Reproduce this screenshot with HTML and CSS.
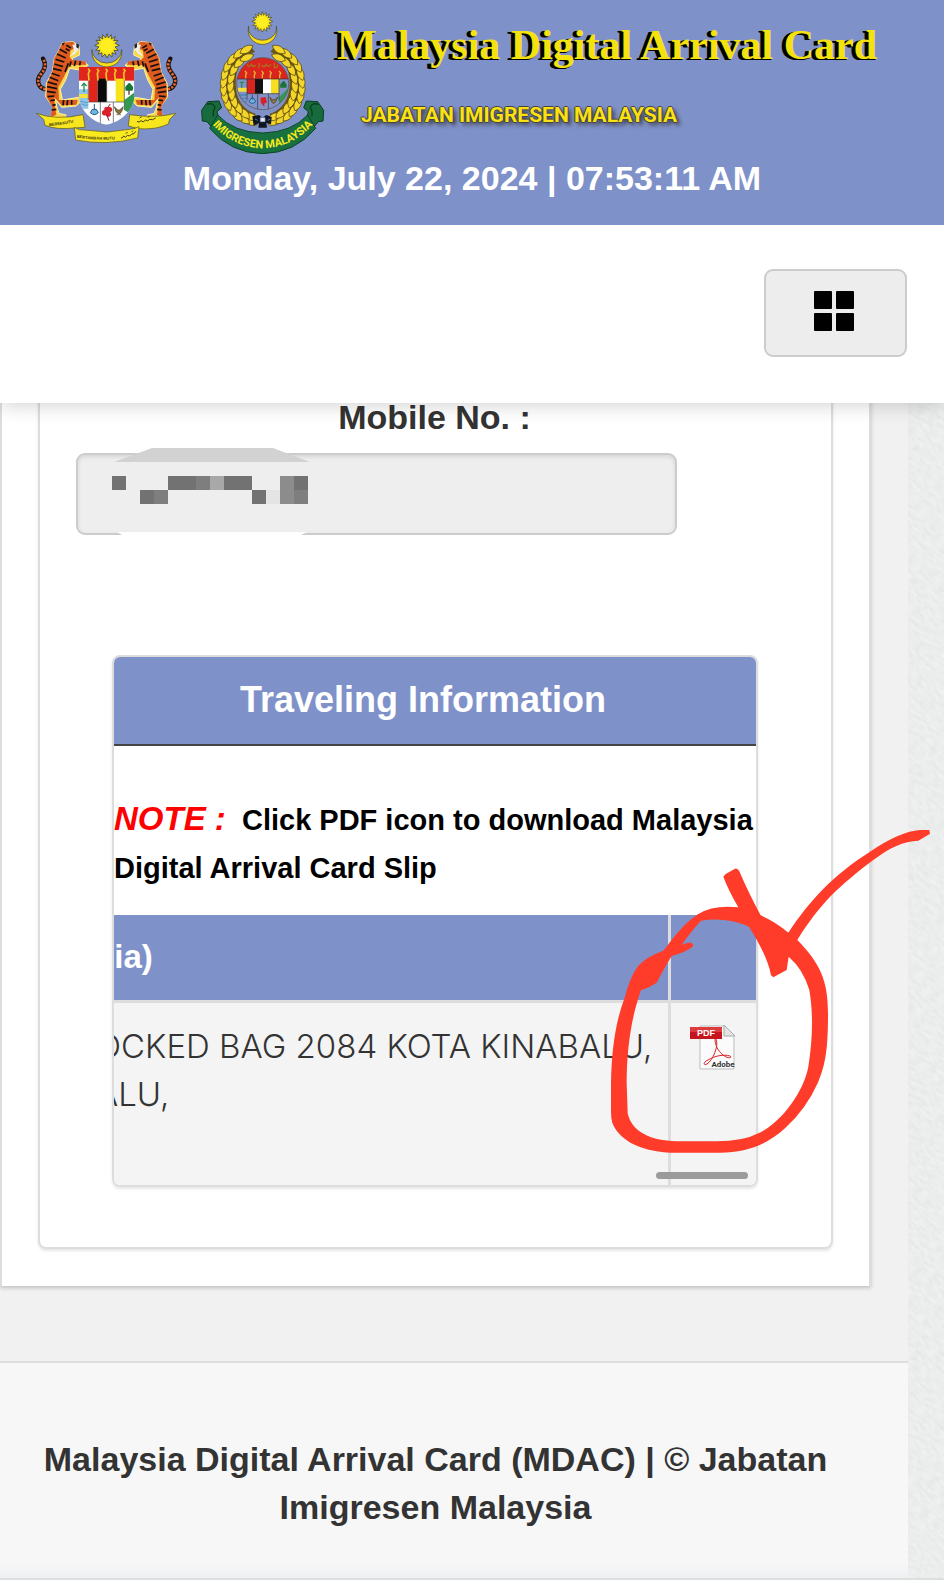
FILE: index.html
```html
<!DOCTYPE html>
<html lang="en">
<head>
    <meta charset="UTF-8">
    <meta name="viewport" content="width=device-width, initial-scale=1.0">
    <title>Malaysia Digital Arrival Card</title>
    <link rel="stylesheet" href="styles.css">
</head>
<body>
    <header class="top">
        <div class="banner">
            <div class="brand">
                <svg class="crest" viewBox="40 90 441 372" aria-hidden="true">
                    <defs>
                        <g id="tiger">
                            <path d="M78 268C52 262 50 238 64 222C78 206 80 192 70 176" fill="none" stroke="#111" stroke-width="13" stroke-linecap="round"/>
                            <path d="M78 268C52 262 50 238 64 222C78 206 80 192 70 176" fill="none" stroke="#e8662a" stroke-width="8" stroke-dasharray="7 4"/>
                            <path d="M128 128L160 125L178 138L180 165L158 175L160 186L192 184L206 196L180 210L150 205L138 240L122 268L128 300L176 292L184 304L170 318L126 322L108 300L112 322L118 340L140 345L132 356L92 356L100 322L78 290L80 250L98 215L104 175L118 150Z" fill="#f8d64a" stroke="#fff3a0" stroke-width="3"/>
                            <path d="M128 128L160 125L172 140L152 152L150 172L158 180L196 184L200 194L150 196L132 232L116 262L118 300L174 300L170 314L126 316L104 292L106 322L110 344L92 352L98 322L80 290L82 250L98 215L104 175L118 150Z" fill="#dd5a20"/>
                            <path d="M158 134L174 132L178 146L166 162L150 170L164 152Z" fill="#eee"/>
                            <path d="M170 130L178 134L177 146L170 142ZM126 130L136 127L130 138Z" fill="#222"/>
                            <path d="M120 148L142 160M112 162L138 174M108 178L134 186M104 192L130 200M100 206L126 212M96 220L120 228M90 232L116 242M84 246L112 254M82 260L112 266M82 274L108 278M84 290L104 288M92 302L106 300M98 316L108 314M96 330L110 328M140 136L154 144M138 146L150 152M154 184L150 200M168 182L164 198M182 184L180 196M132 300L130 316M144 300L142 316M156 300L156 314M146 190L136 216" stroke="#16100c" stroke-width="5" fill="none"/>
                        </g>
                        <g id="sun">
                            <path d="M0 -37L4 -24L13 -34L13 -21L25 -28L20 -16L33 -17L24 -8L37 -2L24 3L34 13L21 13L27 25L15 20L15 33L6 24L0 36L-6 24L-15 33L-15 20L-27 25L-21 13L-34 13L-24 3L-37 -2L-24 -8L-33 -17L-20 -16L-25 -28L-13 -21L-13 -34L-4 -24Z" fill="#f9e61a" stroke="#35331c" stroke-width="2"/>
                            <circle r="20" fill="#ffee20"/>
                        </g>
                    </defs>
                    <use href="#tiger"/>
                    <use href="#tiger" transform="translate(522 0) scale(-1 1)"/>
                    <path d="M217 149A45 45 0 1 0 306 149A42 38 0 1 1 217 149Z" fill="#f9df1a" stroke="#4c451c" stroke-width="2"/>
                    <use href="#sun" x="262" y="138"/>
                    <clipPath id="shield"><path d="M178 200H344V290C342 330 304 366 260 374C216 366 180 330 178 290Z"/></clipPath>
                    <g clip-path="url(#shield)">
                        <rect x="178" y="200" width="168" height="180" fill="#fff"/>
                        <rect x="178" y="200" width="168" height="42" fill="#e1251b"/>
                        <rect x="207" y="236" width="27" height="70" fill="#e1251b"/>
                        <rect x="234" y="236" width="27" height="70" fill="#0a0a0a"/>
                        <rect x="288" y="236" width="26" height="70" fill="#f8e21b"/>
                        <path d="M178 268H206V326H178Z" fill="#8fc5e8"/>
                        <path d="M178 282H206V294H178Z" fill="#f3e13a"/>
                        <path d="M180 306q6-5 12 0t14 0M180 314q6-5 12 0t14 0" stroke="#3e7fb5" fill="none" stroke-width="2"/>
                        <path d="M193 276V254M186 258L193 250L201 258" stroke="#2b8c50" stroke-width="4" fill="none"/>
                        <path d="M314 300L346 276V350L314 330Z" fill="#2f9a50"/>
                        <path d="M328 284V262" stroke="#553c1a" stroke-width="4"/>
                        <path d="M318 272Q314 258 322 256Q328 242 336 256Q344 262 338 272Z" fill="#177535"/>
                        <path d="M206 206V300M261 236V306M314 236V330M206 306H314M242 306V374M281 306V374" stroke="#444" stroke-width="2" fill="none"/>
                        <path d="M212 338Q224 350 236 338L230 328H218ZM224 312V330" fill="#6db6e0" stroke="#26588a" stroke-width="3"/>
                        <path d="M262 322C276 314 284 332 272 336C280 348 264 356 258 346C244 350 244 330 254 330C252 322 260 318 262 322Z" fill="#d8212a"/>
                        <path d="M262 346L268 362M264 322L272 312" stroke="#7c1b1b" stroke-width="3"/>
                        <path d="M284 320Q288 340 298 342Q308 338 310 320L300 330H294ZM290 344H304" fill="#8a7440" stroke="#4b3d20" stroke-width="2"/>
                    </g>
                    <path d="M205 206l5 6l-4 8l2 22M232 206l5 6l-4 8l2 22M258 206l5 6l-4 8l2 22M284 206l5 6l-4 8l2 22M311 206l5 6l-4 8l2 22" fill="none" stroke="#f0c22a" stroke-width="5"/>
                    <path d="M50 340Q110 362 190 344L196 382L164 384Q110 390 76 376L72 358Z" fill="#f7e51d" stroke="#5a5316" stroke-width="2"/>
                    <path d="M468 340Q410 356 330 344L326 378L356 386Q410 390 446 372L450 358Z" fill="#f7e51d" stroke="#5a5316" stroke-width="2"/>
                    <path d="M164 382Q178 392 194 390L262 396L330 388Q348 386 358 380L354 414Q260 438 168 420Z" fill="#f9e91f" stroke="#5a5316" stroke-width="2"/>
                    <path id="motto-a" d="M88 378Q130 376 190 360" fill="none"/>
                    <path id="motto-b" d="M171 413Q240 424 320 415" fill="none"/>
                    <text class="motto"><textPath href="#motto-a">BERSEKUTU</textPath></text>
                    <text class="motto"><textPath href="#motto-b">BERTAMBAH MUTU</textPath></text>
                    <path d="M352 364q6 6 12-2q6 8 14-2q6 6 12-2q8 4 18-4M360 354l6-4M384 352l6-3M304 414q4 2 8-6q4 8 12-2q6 6 12-4q8 2 12-8M318 400l6-3M336 396l4-4" fill="none" stroke="#4a4310" stroke-width="3"/>
                </svg>

                <svg class="seal" viewBox="530 20 390 441" aria-hidden="true">
                    <path d="M685 78A43 43 0 1 0 768 78A42 36 0 1 1 685 78Z" fill="#f9df1a" stroke="#4c451c" stroke-width="2"/>
                    <use href="#sun" transform="translate(726 65) scale(.84)"/>
                    <defs>
                        <g id="leaf">
                            <path d="M0 4C15 -5 20 -22 9 -40C-6 -30 -11 -12 0 4Z" fill="#f4d52a" stroke="#4a3c10" stroke-width="2"/>
                        </g>
                        <g id="spray">
                            <path d="M696 366C640 356 608 312 608 256C610 200 640 160 690 138L704 154C662 172 646 204 646 250C646 296 670 330 706 340Z" fill="#6d5613"/>
                            <use href="#leaf" transform="translate(706 372) rotate(-76)"/>
                            <use href="#leaf" transform="translate(684 368) rotate(-64)"/>
                            <use href="#leaf" transform="translate(662 360) rotate(-54)"/>
                            <use href="#leaf" transform="translate(644 346) rotate(-44)"/>
                            <use href="#leaf" transform="translate(628 328) rotate(-34)"/>
                            <use href="#leaf" transform="translate(616 306) rotate(-22)"/>
                            <use href="#leaf" transform="translate(609 284) rotate(-12)"/>
                            <use href="#leaf" transform="translate(606 260)"/>
                            <use href="#leaf" transform="translate(607 236) rotate(8)"/>
                            <use href="#leaf" transform="translate(613 212) rotate(16)"/>
                            <use href="#leaf" transform="translate(624 190) rotate(26)"/>
                            <use href="#leaf" transform="translate(642 170) rotate(38)"/>
                            <use href="#leaf" transform="translate(662 156) rotate(48)"/>
                            <use href="#leaf" transform="translate(708 358) rotate(-76)"/>
                            <use href="#leaf" transform="translate(684 352) rotate(-58)"/>
                            <use href="#leaf" transform="translate(662 338) rotate(-42)"/>
                            <use href="#leaf" transform="translate(645 320) rotate(-28)"/>
                            <use href="#leaf" transform="translate(634 298) rotate(-14)"/>
                            <use href="#leaf" transform="translate(627 274) rotate(-4)"/>
                            <use href="#leaf" transform="translate(626 248) rotate(8)"/>
                            <use href="#leaf" transform="translate(631 222) rotate(20)"/>
                            <use href="#leaf" transform="translate(644 198) rotate(34)"/>
                            <use href="#leaf" transform="translate(662 178) rotate(56)"/>
                        </g>
                    </defs>
                    <use href="#spray"/>
                    <use href="#spray" transform="translate(1454 0) scale(-1 1)"/>
                    <clipPath id="disc"><circle cx="727" cy="250" r="78"/></clipPath>
                    <g clip-path="url(#disc)">
                        <rect x="645" y="170" width="164" height="164" fill="#8293ca"/>
                        <rect x="645" y="170" width="164" height="66" fill="#dc241f"/>
                        <rect x="680" y="236" width="24" height="44" fill="#dc241f"/>
                        <rect x="704" y="236" width="24" height="44" fill="#111"/>
                        <rect x="728" y="236" width="24" height="44" fill="#fff"/>
                        <rect x="752" y="236" width="24" height="44" fill="#f6e01d"/>
                        <path d="M652 262H680V274H652Z" fill="#f3e13a"/>
                        <path d="M650 284h30M652 294h28M658 304h22" stroke="#4a86be" stroke-width="4"/>
                        <path d="M664 262V244M658 246h14" stroke="#2b8c50" stroke-width="4"/>
                        <path d="M776 290L804 264V300L776 316Z" fill="#2f9a50"/>
                        <path d="M780 262Q778 250 784 248Q790 236 796 248Q802 254 798 262Z" fill="#177535"/>
                        <path d="M645 236H809M680 236V300M776 236V300M680 280H776M712 280V330M744 280V330" stroke="#333" stroke-width="2"/>
                        <path d="M686 304Q696 314 706 304L700 294H692ZM696 284V298" fill="#6db6e0" stroke="#26588a" stroke-width="3"/>
                        <path d="M720 292L736 290L740 306L732 310V320L722 308Z" fill="#d8212a"/>
                        <path d="M748 290Q752 308 760 310Q768 306 772 290L764 298H756Z" fill="#8a7440" stroke="#4b3d20" stroke-width="2"/>
                        <path d="M674 212l5 6l-3 6v10M700 212l5 6l-3 6v10M724 212l5 6l-3 6v10M748 212l5 6l-3 6v10M776 212l5 6l-3 6v10" fill="none" stroke="#e8b62a" stroke-width="4"/>
                        <path d="M680 192q6 12 14 0q4 12 12 2M716 188v16M724 194q8 10 14-2q4 12 14 0M762 188v14q8 2 10-10" fill="none" stroke="#a8721d" stroke-width="4"/>
                    </g>
                    <circle cx="727" cy="250" r="78" fill="none" stroke="#5c4a3a" stroke-width="2"/>
                    <path d="M696 348L716 344L726 352L738 344L754 350L752 372L738 368L740 382H714L716 368L700 376Z" fill="#101522"/>
                    <path d="M720 352h14v12h-14ZM704 356l8 4M742 360l8-4" fill="#dfe5f4" stroke="#8aa0d6" stroke-width="2"/>
                    <path d="M546 362L544 330L562 304L596 302L604 322L590 334L594 350L572 378L560 364ZM908 362L910 330L892 304L858 302L850 322L864 334L860 350L882 378L894 364Z" fill="#176b3c" stroke="#0c3d22" stroke-width="3"/>
                    <path d="M560 312Q580 306 584 322Q576 334 580 348M894 312Q874 306 870 322Q878 334 874 348" fill="none" stroke="#0c3d22" stroke-width="4"/>
                    <path d="M592 344Q640 396 727 398Q814 396 862 344L886 384Q824 458 727 460Q630 458 568 384Z" fill="#17703d" stroke="#0c4526" stroke-width="3"/>
                    <path id="ribbon" d="M572 368Q636 442 727 444Q818 442 882 368" fill="none"/>
                    <text class="ribbon-text"><textPath href="#ribbon" startOffset="50%">IMIGRESEN MALAYSIA</textPath></text>
                </svg>

                <div class="titles">
                    <h1 class="title">Malaysia Digital Arrival Card</h1>
                    <p class="subtitle">JABATAN IMIGRESEN MALAYSIA</p>
                </div>
            </div>
            <p class="clock">Monday, July 22, 2024 | 07:53:11 AM</p>
        </div>
        <nav class="navbar">
            <button class="menu-btn" type="button" aria-label="Menu">
                <svg class="menu-icon" viewBox="0 0 40 40">
                    <rect width="18" height="18" rx="1"/>
                    <rect x="22" width="18" height="18" rx="1"/>
                    <rect y="22" width="18" height="18" rx="1"/>
                    <rect x="22" y="22" width="18" height="18" rx="1"/>
                </svg>
            </button>
        </nav>
    </header>

    <div class="page">
        <div class="content">
            <main class="card">
                <div class="panel">
                    <div class="field">
                        <label class="label" for="mobile">Mobile No. :</label>
                        <div class="input-wrap">
                            <input class="input" id="mobile" type="text" readonly>
                            <svg class="mask" viewBox="0 0 200 90" aria-hidden="true">
                                <path d="M2 14L40 0H161L198 14Z" fill="#d2d2d2"/>
                                <path d="M5 84H195L187 88H190V90H8V88H12Z" fill="#fff"/>
                                <path d="M0 28h14v14h-14ZM56 28h28v14h-28ZM112 28h28v14h-28ZM140 42h14v14h-14ZM182 28h14v14h-14ZM28 42h14v14h-14Z" fill="#727272"/>
                                <path d="M84 28h14v14h-14ZM42 42h14v14h-14ZM182 42h14v14h-14Z" fill="#7e7e7e"/>
                                <path d="M168 28h14v14h-14ZM168 42h14v14h-14Z" fill="#8c8c8c"/>
                                <path d="M98 28h14v14h-14Z" fill="#a8a8a8"/>
                                <path d="M154 42h14v14h-14Z" fill="#e4e4e4"/>
                            </svg>
                        </div>
                    </div>

                    <section class="travel">
                        <h2 class="travel-title">Traveling Information</h2>
                        <p class="note"><em class="note-tag">NOTE :</em>&nbsp; Click PDF icon to download Malaysia Digital Arrival Card Slip</p>
                        <div class="scroller">
                            <table class="trips">
                                <thead>
                                    <tr>
                                        <th>sia)</th>
                                        <th class="pdf-col"></th>
                                    </tr>
                                </thead>
                                <tbody>
                                    <tr>
                                        <td>OCKED BAG 2084 KOTA KINABALU,<br>ALU,</td>
                                        <td class="pdf-col">
                                            <a class="pdf" href="#" aria-label="Download PDF">
                                                <svg class="pdf-icon" viewBox="0 0 46 47">
                                                    <path d="M10 2H34L44 12V45H10Z" fill="#fbfbfb" stroke="#bdbdbd"/>
                                                    <path d="M34 1V12H45Z" fill="#e4e4e4" stroke="#aaa"/>
                                                    <path d="M26 15C29 22 23 36 17 40C13 42 13 38 18 36C24 32 34 30 40 32C43 34 38 35 33 31C28 27 25 21 25 15" fill="none" stroke="#d8232a"/>
                                                    <rect y="3" width="32" height="12" fill="#c4161c"/>
                                                    <path d="M0 3H32V8H0Z" fill="#dd3b3e"/>
                                                    <text x="16" y="12" class="pdf-label">PDF</text>
                                                    <text x="33" y="43" class="pdf-brand">Adobe</text>
                                                </svg>
                                            </a>
                                        </td>
                                    </tr>
                                </tbody>
                            </table>
                            <div class="thumb"></div>
                        </div>
                    </section>
                </div>
            </main>
            <footer class="footer">Malaysia Digital Arrival Card (MDAC) | © Jabatan Imigresen Malaysia</footer>
        </div>
        <svg class="texture" aria-hidden="true">
            <filter id="grain" x="0" y="0" width="100%" height="100%">
                <feTurbulence type="fractalNoise" baseFrequency=".12 .3" numOctaves="3" seed="4"/>
                <feColorMatrix values=".2 0 0 0 .76  .2 0 0 0 .77  .2 0 0 0 .77  0 0 0 0 1"/>
            </filter>
            <rect x="-1200" y="-800" width="2400" height="2400" transform="rotate(45)" filter="url(#grain)" opacity=".7"/>
        </svg>

        <!-- red marker around the PDF link -->
        <svg class="marker" viewBox="0 0 1212 1260" aria-hidden="true">
            <path fill-rule="evenodd" d="M550 230L557 222L585 206Q593 204 598 214Q625 278 662 346Q705 364 745 398C810 300 880 225 990 155Q1080 94 1140 90H1168L1170 101L1135 122C1090 124 1050 142 1000 180C900 255 840 310 772 420C840 490 864 540 864 640C864 740 858 790 835 845Q800 925 735 985C680 1035 620 1057 540 1058H390C290 1052 235 1015 217 968Q213 955 213 935V850C215 750 225 670 255 590Q270 530 295 497Q320 470 370 452C400 415 430 370 475 342Q520 314 595 322Q565 270 550 230ZM483 362Q455 392 425 434L445 428Q457 426 460 438Q440 456 395 468Q375 500 350 548Q325 564 303 570C275 650 260 740 260 850L263 940C275 995 330 1022 410 1024H530Q610 1024 655 1000C720 970 790 880 805 800C818 720 820 640 808 570Q790 508 746 470L740 510L700 532L693 526C685 480 655 425 627 380Q560 350 483 362Z" fill="#ff3b2a"/>
        </svg>
    </div>
</body>
</html>
```
FILE: styles.css
```css
* {
    box-sizing: border-box;
}

body {
    margin: 0;
    background: #fff;
    color: #333;
    font-family: "Liberation Sans", Arial, sans-serif;
    font-size: 34px;
    line-height: 48px;
}

h1, h2, p {
    margin: 0;
}

.top {
    position: sticky;
    top: 0;
    z-index: 5;
    box-shadow: 0 1px 20px rgba(0, 0, 0, 0.2);
}

.banner {
    background: #7f91c9;
    padding: 7px 0 23px;
}

.brand {
    display: flex;
    align-items: flex-end;
    padding-left: 33px;
}

.crest {
    width: 147px;
    height: 124px;
    margin-right: 17px;
}

.seal {
    width: 130px;
    height: 147px;
}

.motto {
    font: bold 12px "Liberation Sans", Arial, sans-serif;
    fill: #3c370f;
}

.ribbon-text {
    font: bold 33px Roboto, "Liberation Sans", sans-serif;
    fill: #f7ea1c;
    text-anchor: middle;
}

.titles {
    align-self: flex-start;
    padding: 14px 0 0 10px;
    white-space: nowrap;
}

.title {
    font: bold 42px/48px "Liberation Serif", "Times New Roman", serif;
    color: #f5e10c;
    text-shadow: -1px 1px #000, -2px 1px #000, -3px 1px #000, -4px 1px #000;
}

.subtitle {
    padding: 22px 0 0 24px;
    font: bold 21px/48px Roboto, "Liberation Sans", sans-serif;
    color: #fbe110;
    text-shadow: 1px 0 #444, -1px 0 #444, 0 1px #444, 0 -1px #444, 3px 3px 4px #333;
}

.clock {
    color: #fff;
    font-weight: bold;
    text-align: center;
}

.navbar {
    display: flex;
    justify-content: flex-end;
    padding: 44px 37px 46px;
    background: #fff;
}

.menu-btn {
    width: 143px;
    height: 88px;
    padding: 0 3px 4px 0;
    border: 2px solid #ccc;
    border-radius: 9px;
    background: #ededed;
    cursor: pointer;
}

.menu-icon {
    display: block;
    width: 40px;
    height: 40px;
    margin: 0 auto;
}

.page {
    position: relative;
    display: flex;
    margin-top: -10px;
    border-bottom: 2px solid #dcdee0;
}

.content {
    flex: 1;
    min-width: 0;
    background: #f1f1f1;
}

.card {
    margin-right: 37px;
    padding: 0 36px 37px;
    background: #fff;
    border: solid #ddd;
    border-width: 0 2px;
    box-shadow: 0 2px 4px rgba(0, 0, 0, 0.2);
}

.panel {
    padding: 0 73px 60px 72px;
    border: 2px solid #ddd;
    border-top: 0;
    border-radius: 0 0 8px 8px;
    box-shadow: 0 2px 3px rgba(0, 0, 0, 0.1);
}

.field {
    margin: 0 81px 120px -36px;
}

.label {
    display: block;
    padding-left: 116px;
    margin-bottom: 12px;
    font-weight: bold;
    text-align: center;
}

.input-wrap {
    position: relative;
    display: flex;
}

.input {
    width: 100%;
    height: 82px;
    padding: 0 20px;
    border: 2px solid #ccc;
    border-radius: 9px;
    background: #eee;
    box-shadow: inset 0 2px 4px rgba(0, 0, 0, 0.1);
    font: inherit;
}

/* blocks that hide the number */
.mask {
    position: absolute;
    left: 36px;
    top: -5px;
    width: 200px;
    height: 90px;
}

.travel {
    overflow: hidden;
    border: 2px solid #ddd;
    border-radius: 8px;
    box-shadow: 0 2px 3px rgba(0, 0, 0, 0.1);
}

.travel-title {
    padding: 19px 24px 20px 0;
    background: #7f91c9;
    border-bottom: 2px solid #444;
    color: #fff;
    font-size: 36px;
    text-align: center;
}

.note {
    padding: 49px 0 23px;
    color: #000;
    font-size: 29px;
    font-weight: bold;
}

.note-tag {
    color: #f00;
    font-size: 33px;
}

.scroller {
    position: relative;
    display: flex;
    justify-content: flex-end;
    overflow: hidden;
}

/* wider than the box: scrolled to its right end */
.trips {
    flex: none;
    width: calc(100% + 37px);
    border-collapse: collapse;
    table-layout: fixed;
}

.trips th {
    height: 86px;
    padding: 0 19px;
    background: #7f91c9;
    color: #fff;
    font-size: 33px;
    text-align: left;
}

.trips td {
    height: 184px;
    padding: 19px 0 0 19px;
    border-top: 3px solid #ddd;
    background: #f4f4f4;
    font-family: Inter, "Liberation Sans", sans-serif;
    font-size: 33px;
    font-weight: 300;
    vertical-align: top;
    white-space: nowrap;
}

.trips .pdf-col {
    width: 87px;
    padding: 21px 0 0 19px;
    border-left: 3px solid #ddd;
}

.pdf {
    display: block;
}

.pdf-icon {
    display: block;
    width: 46px;
    height: 47px;
}

.pdf-label {
    font: bold 9px "Liberation Sans", sans-serif;
    fill: #fff;
    text-anchor: middle;
}

.pdf-brand {
    font: bold 8px Roboto, "Liberation Sans", sans-serif;
    fill: #333;
    text-anchor: middle;
}

.thumb {
    position: absolute;
    right: 8px;
    bottom: 6px;
    width: 92px;
    height: 7px;
    border-radius: 4px;
    background: #9b9b9b;
}

.footer {
    margin-top: 75px;
    padding: 72px 74px 47px 37px;
    border-top: 2px solid #ddd;
    background: linear-gradient(to top, #eef0f2, #f7f7f7 14px);
    font-weight: bold;
    text-align: center;
}

.texture {
    width: 36px;
    background: #e4e6e6;
}

.marker {
    position: absolute;
    right: 0;
    top: 407px;
    width: 404px;
    height: 420px;
}
```
